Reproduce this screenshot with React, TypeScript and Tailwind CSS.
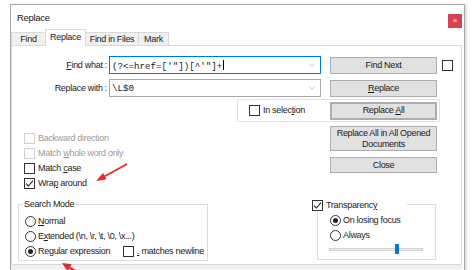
import { ChevronDown } from "lucide-react";

function Box({ checked = false, disabled = false }: { checked?: boolean; disabled?: boolean }) {
  return (
    <span
      className={
        "flex h-[11px] w-[11px] shrink-0 items-center justify-center border bg-white " +
        (disabled ? "border-[#cfcfcf]" : "border-[#333]")
      }
    >
      {checked && (
        <svg width="9" height="9" viewBox="0 0 9 9">
          <path d="M1 4.6 L3.4 7 L8 1.6" fill="none" stroke="#222" strokeWidth="1.1" />
        </svg>
      )}
    </span>
  );
}

function Radio({ on = false }: { on?: boolean }) {
  return (
    <span className="flex h-[11px] w-[11px] shrink-0 items-center justify-center rounded-full border border-[#333] bg-white">
      {on && <span className="h-[5px] w-[5px] rounded-full bg-[#222]" />}
    </span>
  );
}

function Btn({ children, className = "" }: { children: React.ReactNode; className?: string }) {
  return (
    <div
      className={
        "flex w-[107px] shrink-0 items-center justify-center border border-[#adadad] bg-[#e1e1e1] px-[3px] text-center leading-[11px] " +
        className
      }
    >
      {children}
    </div>
  );
}

function Opt({ children, disabled = false, checked = false }: { children: React.ReactNode; disabled?: boolean; checked?: boolean }) {
  return (
    <div className={"flex h-[15px] items-center gap-[3px] " + (disabled ? "text-[#9a9a9a]" : "")}>
      <Box checked={checked} disabled={disabled} />
      <span>{children}</span>
    </div>
  );
}

export default function App() {
  return (
    <div className="relative h-[270px] w-[474px] overflow-hidden bg-white font-['Liberation_Sans',Arial,sans-serif] text-[9px] leading-[11px] tracking-[-0.3px] text-[#1a1a1a]">
      <div className="ml-[10px] mt-[4px] flex h-[270px] w-[455px] flex-col border-l border-r border-t border-[#a8a8a8] bg-white pr-[2px] shadow-[2px_0_2px_rgba(0,0,0,0.12)]">
        {/* title bar */}
        <div className="flex h-[24px] items-start justify-between">
          <span className="ml-[6px] mt-[7px] text-[9.5px]">Replace</span>
          <span className="mt-[9px] flex h-[14px] w-[14px] items-center justify-center bg-[#d8434b] text-[8px] leading-none text-white">
            ×
          </span>
        </div>

        {/* tabs */}
        <div className="flex h-[17px] items-end">
          <div className="flex h-[14px] w-[34px] items-center justify-center border-b border-l border-t border-[#d9d9d9] bg-[#f0f0f0]">Find</div>
          <div className="flex h-[17px] w-[41px] items-center justify-center border-l border-r border-t border-[#d9d9d9] bg-white pb-[2px]">Replace</div>
          <div className="flex h-[14px] w-[52px] items-center justify-center border-b border-t border-[#d9d9d9] bg-[#f0f0f0]">Find in Files</div>
          <div className="flex h-[14px] w-[31px] items-center justify-center border-b border-l border-r border-t border-[#d9d9d9] bg-[#f0f0f0]">Mark</div>
          <div className="h-[1px] flex-1 bg-[#d9d9d9]" />
        </div>

        {/* panel */}
        <div className="flex h-[219px] flex-col border-b border-l border-r border-[#d9d9d9] bg-white">
          {/* find what */}
          <div className="mt-[10px] flex h-[18px] items-center">
            <span className="w-[95px] text-right">
              <u>F</u>ind what :
            </span>
            <div className="ml-[2px] flex h-[18px] w-[212px] items-center justify-between border border-[#0078d7] pl-[2px] pr-[3px]">
              <span className="font-['Liberation_Mono',monospace] text-[9.2px] tracking-normal">
                {"(?<=href=['\"])[^'\"]+"}
                <span className="ml-[1px] inline-block h-[10px] w-[1px] translate-y-[1px] bg-black" />
              </span>
              <ChevronDown size={10} strokeWidth={1.2} className="text-[#777]" />
            </div>
            <Btn className="ml-[9px] h-[17px]">Find Next</Btn>
            <span className="ml-[5px]">
              <Box />
            </span>
          </div>

          {/* replace with */}
          <div className="mt-[5px] flex h-[18px] items-center">
            <span className="w-[95px] text-right">Replace with :</span>
            <div className="ml-[2px] flex h-[18px] w-[212px] items-center justify-between border border-[#a9a9a9] pl-[2px] pr-[3px]">
              <span className="font-['Liberation_Mono',monospace] text-[9.2px] tracking-normal">\L$0</span>
              <ChevronDown size={10} strokeWidth={1.2} className="text-[#777]" />
            </div>
            <Btn className="ml-[9px] h-[17px]">
              <span>
                <u>R</u>eplace
              </span>
            </Btn>
          </div>

          {/* in selection */}
          <div className="ml-[225px] mt-[2px] flex h-[23px] w-[203px] items-center border border-[#e2e2e2] pl-[11px]">
            <div className="flex w-[81px] items-center gap-[3px]">
              <Box />
              <span>
                In selec<u>t</u>ion
              </span>
            </div>
            <Btn className="h-[18px] border-2 border-[#0078d7]">
              <span>
                Replace <u>A</u>ll
              </span>
            </Btn>
          </div>

          {/* options + buttons */}
          <div className="flex">
            <div className="flex w-[318px] flex-col pl-[12px] pt-[9px]">
              <Opt disabled>Backward direction</Opt>
              <Opt disabled>
                Match <u>w</u>hole word only
              </Opt>
              <Opt>
                Match <u>c</u>ase
              </Opt>
              <Opt checked>
                Wra<u>p</u> around
              </Opt>
            </div>
            <div className="flex flex-col pt-[4px]">
              <Btn className="h-[25px]">
                <span>Replace All in All Opened Documents</span>
              </Btn>
              <Btn className="mt-[6px] h-[16px]">Close</Btn>
            </div>
          </div>

          {/* groups */}
          <div className="mt-[8px] flex items-start">
            <fieldset className="ml-[6px] h-[62px] w-[190px] border border-[#dcdcdc] pl-[6px] pt-[4px]">
              <legend className="-ml-[2px] px-[1px] leading-[11px]">Search Mode</legend>
              <div className="flex h-[15px] items-center gap-[2px]">
                <Radio />
                <span>
                  <u>N</u>ormal
                </span>
              </div>
              <div className="flex h-[15px] items-center gap-[2px]">
                <Radio />
                <span>
                  E<u>x</u>tended (\n, \r, \t, \0, \x...)
                </span>
              </div>
              <div className="flex h-[15px] items-center gap-[2px]">
                <Radio on />
                <span className="w-[83px]">
                  Re<u>g</u>ular expression
                </span>
                <Box />
                <span className="ml-[1px]">
                  <u>.</u> matches newline
                </span>
              </div>
            </fieldset>

            <div className="ml-[104px] flex flex-col">
              <div className="relative z-10 flex h-[13px] w-[95px] items-center gap-[3px] bg-white">
                <Box checked />
                <span>
                  Transparenc<u>y</u>
                </span>
              </div>
              <div className="-mt-[8px] ml-[5px] flex h-[56px] w-[119px] flex-col border border-[#dcdcdc] pl-[12px] pt-[8px]">
                <div className="flex h-[15px] items-center gap-[2px]">
                  <Radio on />
                  <span>On losing focus</span>
                </div>
                <div className="flex h-[15px] items-center gap-[2px]">
                  <Radio />
                  <span>Always</span>
                </div>
                <div className="-ml-[1px] mt-[1px] flex h-[10px] w-[94px] items-center">
                  <div className="h-[3px] w-[66px] border-y border-l border-[#d4d4d4] bg-[#e9e9e9]" />
                  <div className="h-[10px] w-[4px] bg-[#0078d7]" />
                  <div className="h-[3px] flex-1 border-y border-r border-[#d4d4d4] bg-[#e9e9e9]" />
                </div>
              </div>
            </div>
          </div>
        </div>
        <div className="flex-1 bg-[#f0f0f0]" />
      </div>

      {/* red annotation arrows */}
      <svg className="pointer-events-none absolute left-0 top-0" width="474" height="270">
        <line x1="127" y1="164" x2="104.8" y2="176.2" stroke="#e3262b" strokeWidth="1.6" />
        <polygon points="96,181 106.5,179.3 103.1,173.1" fill="#e3262b" />
        <line x1="69.6" y1="267.7" x2="76" y2="271.5" stroke="#e3262b" strokeWidth="2.5" />
        <polygon points="62,263 71.7,264.3 67.5,271.1" fill="#e3262b" />
      </svg>
    </div>
  );
}
